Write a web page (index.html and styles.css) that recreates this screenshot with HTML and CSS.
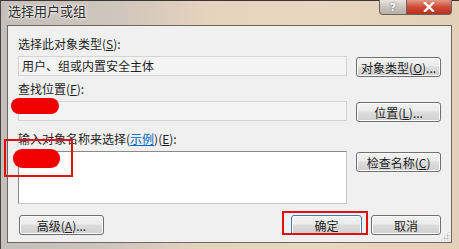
FILE: index.html
```html
<!DOCTYPE html>
<html lang="zh-CN">
<head>
    <meta charset="UTF-8">
    <title>选择用户或组</title>
    <link rel="stylesheet" href="styles.css">
</head>
<body>
    <div class="window">
        <div class="titlebar">
            <span class="title">选择用户或组</span>
            <div class="caption-buttons">
                <div class="cap-btn help">?</div>
                <div class="cap-btn close">
                    <svg width="14" height="10" viewBox="0 0 14 10">
                        <path d="M3 1 L11 9 M11 1 L3 9" stroke="#fff" stroke-width="2.4" stroke-linecap="square"/>
                    </svg>
                </div>
            </div>
        </div>
        <div class="client">
            <div class="label">选择此对象类型(<u>S</u>):</div>
            <div class="row">
                <div class="textbox readonly">用户、组或内置安全主体</div>
                <button class="btn side">对象类型(<u>O</u>)...</button>
            </div>

            <div class="label">查找位置(<u>F</u>):</div>
            <div class="row">
                <div class="textbox readonly"></div>
                <button class="btn side">位置(<u>L</u>)...</button>
            </div>

            <div class="label gap-top">输入对象名称来选择(<a href="#" class="link">示例</a>)(<u>E</u>):</div>
            <div class="row">
                <div class="textbox names"></div>
                <button class="btn side">检查名称(<u>C</u>)</button>
            </div>

            <div class="footer">
                <button class="btn side">高级(<u>A</u>)...</button>
                <div class="footer-right">
                    <button class="btn ok">确定</button>
                    <button class="btn cancel">取消</button>
                </div>
            </div>
            <div class="grip"></div>
        </div>

        <!-- annotation marks drawn over the dialog -->
        <div class="blot blot-location"></div>
        <div class="mark mark-names"></div>
        <div class="blot blot-names"></div>
        <div class="mark mark-ok"></div>
    </div>
</body>
</html>
```

FILE: styles.css
```css
html, body {
    margin: 0;
    padding: 0;
}
body {
    font-family: "Noto Sans CJK SC", "DejaVu Sans", sans-serif;
    font-size: 12px;
    color: #1e1e1e;
}
.window {
    position: relative;
    width: 459px;
    height: 249px;
    box-sizing: border-box;
    padding: 0 7px 6px 6px;
    background: linear-gradient(90deg, #c3bfbb 0%, #cfc6bc 25%, #e6d3bd 45%, #e9d6c0 70%, #e4cfb8 100%);
    border-left: 1px solid #4a4540;
    border-top: 1px solid #3a3530;
    display: flex;
    flex-direction: column;
}
.titlebar {
    height: 24px;
    display: flex;
    justify-content: space-between;
    align-items: flex-start;
}
.title {
    font-size: 13px;
    line-height: 20px;
    padding-left: 1px;
    color: #2a2a2a;
    text-shadow: 0 0 4px #fff, 0 0 2px #fff;
}
.caption-buttons {
    display: flex;
    margin-right: 0;
    margin-top: -1px;
}
.cap-btn {
    height: 15px;
    box-sizing: border-box;
    border: 1px solid #6a6460;
    border-top: none;
    display: flex;
    align-items: center;
    justify-content: center;
}
.help {
    width: 28px;
    border-radius: 0 0 0 4px;
    background: linear-gradient(#e8e4e0, #c9c3bd 50%, #b9b2ab);
    color: #fff;
    font-weight: bold;
    font-family: "DejaVu Sans", sans-serif;
    font-size: 11px;
    text-shadow: 0 0 2px #555;
}
.close {
    width: 45px;
    border-left: none;
    border-radius: 0 0 4px 0;
    background: linear-gradient(#e39a8a, #cf4a35 50%, #b8301f);
}
.client {
    position: relative;
    flex: 1;
    background: #f0f0f0;
    border: 1px solid #6e6760;
    padding: 10px 10px 0 10px;
    display: flex;
    flex-direction: column;
}
.label {
    height: 16px;
    line-height: 16px;
    margin-bottom: 4px;
}
.label.gap-top {
    margin-top: 5px;
}
.link {
    color: #0066cc;
}
.row {
    display: flex;
    align-items: flex-start;
    gap: 9px;
    margin-bottom: 4px;
}
.textbox {
    width: 330px;
    height: 20px;
    box-sizing: border-box;
    line-height: 18px;
    padding-left: 3px;
}
.textbox.readonly {
    background: #f4f4f4;
    border: 1px solid #d4d4d4;
}
.textbox.names {
    height: 53px;
    background: #fff;
    border: 1px solid #c8c8c8;
    border-top-color: #8a8a8a;
    border-left-color: #8a8a8a;
}
.btn {
    font-family: inherit;
    font-size: 12px;
    color: #1e1e1e;
    height: 20px;
    padding: 0;
    box-sizing: border-box;
    border: 1px solid #707070;
    border-radius: 3px;
    background: linear-gradient(#f2f2f2 0%, #ebebeb 45%, #dddddd 50%, #cfcfcf 100%);
    box-shadow: inset 0 0 0 1px #fcfcfc;
}
.btn.side {
    width: 85px;
}
.row .btn.side {
    margin-top: 1px;
}
.footer {
    display: flex;
    justify-content: space-between;
    margin-top: 7px;
    padding-left: 1px;
}
.footer-right {
    display: flex;
    gap: 9px;
}
.btn.ok {
    width: 71px;
    border-color: #3c7fb1;
}
.btn.cancel {
    width: 70px;
}
.grip {
    position: absolute;
    right: 1px;
    bottom: 1px;
    width: 10px;
    height: 10px;
    background: radial-gradient(circle, #b8b8b8 0.8px, transparent 1.2px) 0 0 / 3px 3px;
    clip-path: polygon(100% 0, 100% 100%, 0 100%);
}
.blot {
    position: absolute;
    background: #f00000;
    border-radius: 9px;
}
.blot-location {
    left: 10px;
    top: 97px;
    width: 48px;
    height: 16px;
}
.blot-names {
    left: 12px;
    top: 148px;
    width: 47px;
    height: 19px;
}
.mark {
    position: absolute;
    border: 2px solid #e01010;
    box-sizing: border-box;
}
.mark-names {
    left: 3px;
    top: 138px;
    width: 69px;
    height: 38px;
}
.mark-ok {
    left: 281px;
    top: 210px;
    width: 86px;
    height: 24px;
}
```
